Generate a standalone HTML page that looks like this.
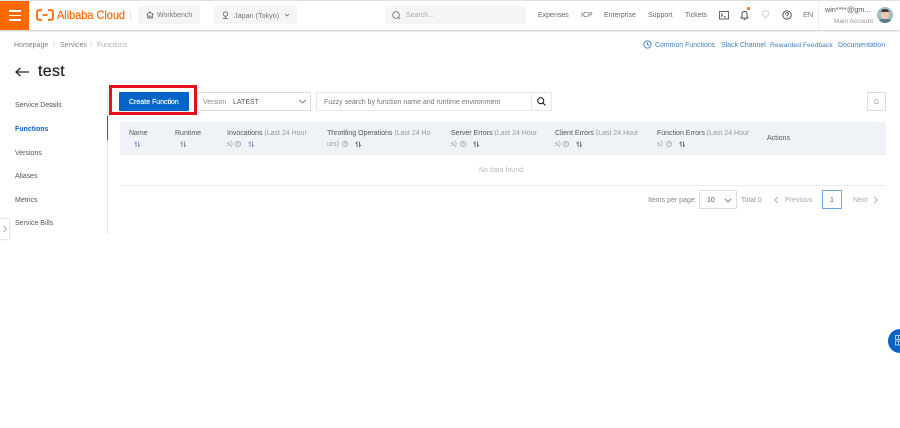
<!DOCTYPE html>
<html><head><meta charset="utf-8">
<style>
html,body{margin:0;padding:0;background:#fff}
body{width:900px;height:428px;overflow:hidden;position:relative;font-family:"Liberation Sans",sans-serif;font-size:7px;color:#555;filter:blur(.2px)}
.t{position:absolute;white-space:nowrap;line-height:10px;margin-top:1px}
.b{position:absolute;box-sizing:border-box}
svg{position:absolute;overflow:visible}
.g{color:#888}.l{color:#3f7fc4}.h{color:#555}.m{color:#999}
</style></head><body>
<div class="b" style="left:0;top:0;width:900px;height:1px;background:#e4e4e4"></div>
<div class="b" style="left:0;top:1px;width:900px;height:29px;background:#fff;box-shadow:0 1px 2px rgba(0,0,0,.22)"></div>
<div class="b" style="left:0;top:1px;width:29px;height:29px;background:#ff6a00"></div>
<div class="b" style="left:9px;top:10px;width:12px;height:1.5px;background:#fff"></div>
<div class="b" style="left:9px;top:14.5px;width:12px;height:1.5px;background:#fff"></div>
<div class="b" style="left:9px;top:19px;width:12px;height:1.5px;background:#fff"></div>
<svg style="left:36px;top:9px" width="18" height="12" viewBox="0 0 18 12" fill="none" stroke="#ff6a00" stroke-width="1.8"><path d="M6 1.2H3Q1 1.2 1 3V9Q1 10.8 3 10.8H6M12 1.2H15Q17 1.2 17 3V9Q17 10.8 15 10.8H12M6.5 6H11.5"/></svg>
<div class="t" style="left:57px;top:8px;margin-top:0;font-size:12px;line-height:14px;color:#ff6a00;-webkit-text-stroke:.2px #ff6a00;transform:scaleX(.91);transform-origin:left top">Alibaba Cloud</div>
<div class="b" style="left:130px;top:10px;width:1px;height:10px;background:#e2e2e2"></div>
<div class="b" style="left:138px;top:6px;width:62px;height:18px;background:#f4f5f6"></div>
<svg style="left:146px;top:11px" width="8" height="8" viewBox="0 0 8 8" fill="none" stroke="#666" stroke-width=".8"><path d="M.5 3.5L4 1L7.500 3.500M1.500 3V7H6.500V3M3 7V5H5V7"/></svg>
<div class="t g" style="left:157px;top:10px;color:#777">Workbench</div>
<div class="b" style="left:214px;top:6px;width:83px;height:18px;background:#f4f5f6"></div>
<svg style="left:222px;top:11px" width="7" height="9" viewBox="0 0 7 9" fill="none" stroke="#666" stroke-width=".8"><circle cx="3.500" cy="3" r="2.200"/><path d="M1 7.500H6M3.500 5.200V7.500"/></svg>
<div class="t g" style="left:234px;top:10px;color:#777;font-size:7.2px">Japan (Tokyo)</div>
<svg style="left:284px;top:13px" width="6" height="4" viewBox="0 0 6 4" fill="none" stroke="#666" stroke-width=".8"><path d="M1 1L3 3L5 1"/></svg>
<div class="b" style="left:385px;top:6px;width:141px;height:18px;background:#f4f5f6"></div>
<svg style="left:392px;top:11px" width="9" height="9" viewBox="0 0 9 9" fill="none" stroke="#777" stroke-width=".9"><circle cx="4" cy="4" r="3.300"/><path d="M6.400 6.400L8 8"/></svg>
<div class="t m" style="left:406px;top:10px;color:#aaa">Search...</div>
<div class="t h" style="left:538px;top:10px;color:#666">Expenses</div>
<div class="t h" style="left:581px;top:10px;color:#666">ICP</div>
<div class="t h" style="left:604px;top:10px;color:#666">Enterprise</div>
<div class="t h" style="left:648px;top:10px;color:#666">Support</div>
<div class="t h" style="left:685px;top:10px;color:#666">Tickets</div>
<svg style="left:719px;top:11px" width="10" height="9" viewBox="0 0 10 9" fill="none" stroke="#555" stroke-width=".9"><rect x=".5" y=".5" width="9" height="7.500"/><path d="M2 2.500L3.500 4L2 5.500M4.500 6H7"/></svg>
<svg style="left:740px;top:10px" width="9" height="10" viewBox="0 0 9 10" fill="none" stroke="#444" stroke-width=".9"><path d="M1 8H8L7 6.500V4Q7 1.500 4.500 1.500Q2 1.500 2 4V6.500ZM3.500 9.500H5.500"/></svg>
<div class="b" style="left:747px;top:7px;width:3px;height:3px;border-radius:50%;background:#ff6a00"></div>
<svg style="left:761px;top:10px" width="9" height="10" viewBox="0 0 9 10" fill="none" stroke="#c6ccd0" stroke-width=".9"><path d="M3.200 7V6.300Q1.300 5.200 1.300 3.600Q1.300 .8 4.500 .8Q7.700 .8 7.700 3.600Q7.700 5.200 5.800 6.300V7ZM3.500 9H5.500"/></svg>
<svg style="left:782px;top:10px" width="10" height="10" viewBox="0 0 10 10" fill="none" stroke="#444" stroke-width=".9"><circle cx="5" cy="5" r="4.200"/><path d="M3.500 4Q3.500 2.700 5 2.700Q6.500 2.700 6.500 3.900Q6.500 4.700 5 5.500V6.300M5 7V7.800"/></svg>
<div class="t g" style="left:803px;top:10px;margin-top:0;color:#777;font-size:7.4px">EN</div>
<div class="b" style="left:818px;top:1px;width:1px;height:29px;background:#eee"></div>
<div class="t" style="left:825px;top:5px;margin-top:0;color:#555;font-size:7.2px">win****@gm...</div>
<div class="t" style="left:834px;top:15.500px;color:#999;font-size:6.500px">Main Account</div>
<div class="b" style="left:877px;top:7px;width:16px;height:16px;border-radius:50%;background:#9fbecb;overflow:hidden">
<div class="b" style="left:4px;top:3px;width:8px;height:9px;border-radius:40%;background:#edc7ad"></div>
<div class="b" style="left:4px;top:2px;width:8px;height:3px;border-radius:3px 3px 0 0;background:#4b372c"></div>
<div class="b" style="left:2px;top:12px;width:12px;height:5px;border-radius:4px;background:#5d7d8f"></div>
</div>

<div class="t" style="left:14px;top:40px;color:#808080">Homepage</div>
<div class="t" style="left:53px;top:40px;color:#c4c4c4">/</div>
<div class="t" style="left:60px;top:40px;color:#808080">Services</div>
<div class="t" style="left:90px;top:40px;color:#c4c4c4">/</div>
<div class="t" style="left:97px;top:40px;color:#b0b0b0">Functions</div>

<svg style="left:643px;top:40px" width="9" height="9" viewBox="0 0 9 9" fill="none" stroke="#2f7dd1" stroke-width=".9"><circle cx="4.500" cy="4.500" r="3.700"/><path d="M4.500 2.300V4.700L6 5.500"/></svg>
<div class="t l" style="left:655px;top:40px;font-size:6.950px">Common Functions</div>
<div class="t l" style="left:721px;top:40px;font-size:6.950px">Slack Channel</div>
<div class="t l" style="left:770px;top:40px;font-size:6.800px">Rewarded Feedback</div>
<div class="t l" style="left:838px;top:40px">Documentation</div>

<svg style="left:15px;top:67px" width="14" height="10" viewBox="0 0 14 10" fill="none" stroke="#222" stroke-width="1.300"><path d="M14 5H1M5.500 .8L1 5L5.500 9.200"/></svg>
<div class="t" style="left:38px;top:63px;margin-top:0;font-size:16px;line-height:18px;color:#222;-webkit-text-stroke:.2px #222;letter-spacing:.3px">test</div>

<div class="b" style="left:107px;top:92px;width:1px;height:142px;background:#e3e3e3"></div>
<div class="b" style="left:107px;top:116px;width:1px;height:24px;background:#1a5fb4"></div>
<div class="t" style="left:15px;top:100px;color:#555">Service Details</div>
<div class="t" style="left:15px;top:124px;color:#0f62c6;font-weight:700">Functions</div>
<div class="t" style="left:15px;top:148px;color:#555">Versions</div>
<div class="t" style="left:15px;top:171px;color:#555">Aliases</div>
<div class="t" style="left:15px;top:195px;color:#555">Metrics</div>
<div class="t" style="left:15px;top:218px;color:#555">Service Bills</div>
<div class="b" style="left:0;top:219px;width:9px;height:20px;background:#fff;box-shadow:0 0 2px rgba(0,0,0,.3)"></div>
<svg style="left:3px;top:225px" width="4" height="8" viewBox="0 0 4 8" fill="none" stroke="#aaa" stroke-width=".9"><path d="M.5 .8L3.500 4L.5 7.200"/></svg>

<div class="b" style="left:119px;top:92px;width:70px;height:19px;background:#0064c8;border-radius:1px"></div>
<div class="t" style="left:129px;top:97px;color:#fff;-webkit-text-stroke:.15px #fff">Create Function</div>
<div class="b" style="left:109px;top:85px;width:88px;height:30px;border:3px solid #e4101f"></div>

<div class="b" style="left:197px;top:92px;width:114px;height:19px;border:1px solid #ddd;border-radius:1px"></div>
<div class="t" style="left:203px;top:97px;color:#888">Version</div>
<div class="t" style="left:233px;top:96.500px;color:#555">LATEST</div>
<svg style="left:298px;top:99px" width="9" height="5" viewBox="0 0 9 5" fill="none" stroke="#777" stroke-width=".9"><path d="M1 .8L4.500 4L8 .8"/></svg>
<div class="b" style="left:316px;top:92px;width:236px;height:19px;border:1px solid #e6e6e6;border-radius:1px"></div>
<div class="b" style="left:531px;top:92px;width:1px;height:19px;background:#e6e6e6"></div>
<div class="t" style="left:324px;top:97px;color:#777">Fuzzy search by function name and runtime environment</div>
<svg style="left:537px;top:97px" width="9" height="9" viewBox="0 0 9 9" fill="none" stroke="#222" stroke-width="1.100"><circle cx="3.700" cy="3.700" r="3"/><path d="M6 6L8.500 8.500"/></svg>
<div class="b" style="left:867px;top:92px;width:19px;height:19px;border:1px solid #ddd"></div>
<svg style="left:874px;top:99px" width="5" height="5" viewBox="0 0 5 5" fill="none" stroke="#aaa" stroke-width=".8"><path d="M4.300 1.500A2.100 2.100 0 1 0 4.600 2.600"/></svg>

<div class="b" style="left:120px;top:122px;width:766px;height:33px;background:#eff2f7;border-bottom:1px solid #e8ebef"></div>
<div class="b" style="left:120px;top:185px;width:766px;height:1px;background:#ececec"></div>

<div class="t h" style="left:129px;top:128px;">Name</div>
<div class="t h" style="left:175px;top:128px">Runtime</div>
<div class="t h" style="left:227px;top:128px">Invocations <span style="color:#999">(Last 24 Hour</span></div>
<div class="t" style="left:227px;top:139px;color:#999">s)</div>
<div class="t h" style="left:327px;top:128px">Throttling Operations <span style="color:#999">(Last 24 Ho</span></div>
<div class="t" style="left:327px;top:139px;color:#999">urs)</div>
<div class="t h" style="left:451px;top:128px">Server Errors <span style="color:#999">(Last 24 Hour</span></div>
<div class="t" style="left:451px;top:139px;color:#999">s)</div>
<div class="t h" style="left:555px;top:128px">Client Errors <span style="color:#999">(Last 24 Hour</span></div>
<div class="t" style="left:555px;top:139px;color:#999">s)</div>
<div class="t h" style="left:657px;top:128px">Function Errors <span style="color:#999">(Last 24 Hour</span></div>
<div class="t" style="left:657px;top:139px;color:#999">s)</div>
<div class="t h" style="left:767px;top:133px">Actions</div>

<svg width="0" height="0"><defs>
<g id="s"><path d="M2 6V1L.5 2.500M4.500 0.500V5.500L6 4" fill="none" stroke-width=".8"/></g>
<g id="q"><circle cx="3" cy="3" r="2.600" fill="none" stroke="#888" stroke-width=".6"/><path d="M2.200 2.500Q2.200 1.700 3 1.700Q3.800 1.700 3.800 2.400Q3.800 2.900 3 3.300V3.800M3 4.200V4.700" fill="none" stroke="#888" stroke-width=".5"/></g>
</defs></svg>
<svg style="left:134px;top:141px" width="7" height="6" stroke="#7d7fc0"><use href="#s"/></svg>
<svg style="left:180px;top:141px" width="7" height="6" stroke="#66809a"><use href="#s"/></svg>
<svg style="left:248px;top:141px" width="7" height="6" stroke="#7d7fc0"><use href="#s"/></svg>
<svg style="left:235px;top:141px" width="6" height="6"><use href="#q"/></svg>
<svg style="left:342px;top:141px" width="6" height="6"><use href="#q"/></svg>
<svg style="left:355px;top:141px" width="7" height="6" stroke="#555"><use href="#s"/></svg>
<svg style="left:460px;top:141px" width="6" height="6"><use href="#q"/></svg>
<svg style="left:473px;top:141px" width="7" height="6" stroke="#555"><use href="#s"/></svg>
<svg style="left:563px;top:141px" width="6" height="6"><use href="#q"/></svg>
<svg style="left:576px;top:141px" width="7" height="6" stroke="#555"><use href="#s"/></svg>
<svg style="left:666px;top:141px" width="6" height="6"><use href="#q"/></svg>
<svg style="left:679px;top:141px" width="7" height="6" stroke="#555"><use href="#s"/></svg>

<div class="t" style="left:479px;top:165px;color:#bbb">No data found.</div>

<div class="t" style="left:648px;top:195px;color:#888">Items per page:</div>
<div class="b" style="left:699px;top:190px;width:38px;height:19px;border:1px solid #ddd;border-radius:1px"></div>
<div class="t" style="left:707px;top:195px;color:#555">10</div>
<svg style="left:724px;top:198px" width="8" height="5" viewBox="0 0 8 5" fill="none" stroke="#777" stroke-width=".9"><path d="M.8 .8L4 4L7.200 .8"/></svg>
<div class="t" style="left:741px;top:195px;color:#999">Total 0</div>
<svg style="left:774px;top:196px" width="5" height="8" viewBox="0 0 5 8" fill="none" stroke="#aaa" stroke-width=".9"><path d="M4 .8L.8 4L4 7.200"/></svg>
<div class="t" style="left:785px;top:195px;color:#aaa">Previous</div>
<div class="b" style="left:822px;top:190px;width:20px;height:19px;border:1px solid #6aa7e8;border-radius:1px"></div>
<div class="t" style="left:830px;top:195px;color:#1a6cc8">1</div>
<div class="t" style="left:853px;top:195px;color:#aaa">Next</div>
<svg style="left:873px;top:196px" width="5" height="8" viewBox="0 0 5 8" fill="none" stroke="#aaa" stroke-width=".9"><path d="M1 .8L4.200 4L1 7.200"/></svg>

<div class="b" style="left:888px;top:329px;width:24px;height:24px;border-radius:50%;background:#0a64c8"></div>
<svg style="left:895px;top:335px" width="6" height="11" viewBox="0 0 6 11" fill="none" stroke="#cfe2f7" stroke-width=".8"><rect x=".5" y=".5" width="6" height="4"/><rect x=".5" y="6" width="6" height="4"/><path d="M3.500 .5V4.500M3.500 6V10"/></svg>
</body></html>
